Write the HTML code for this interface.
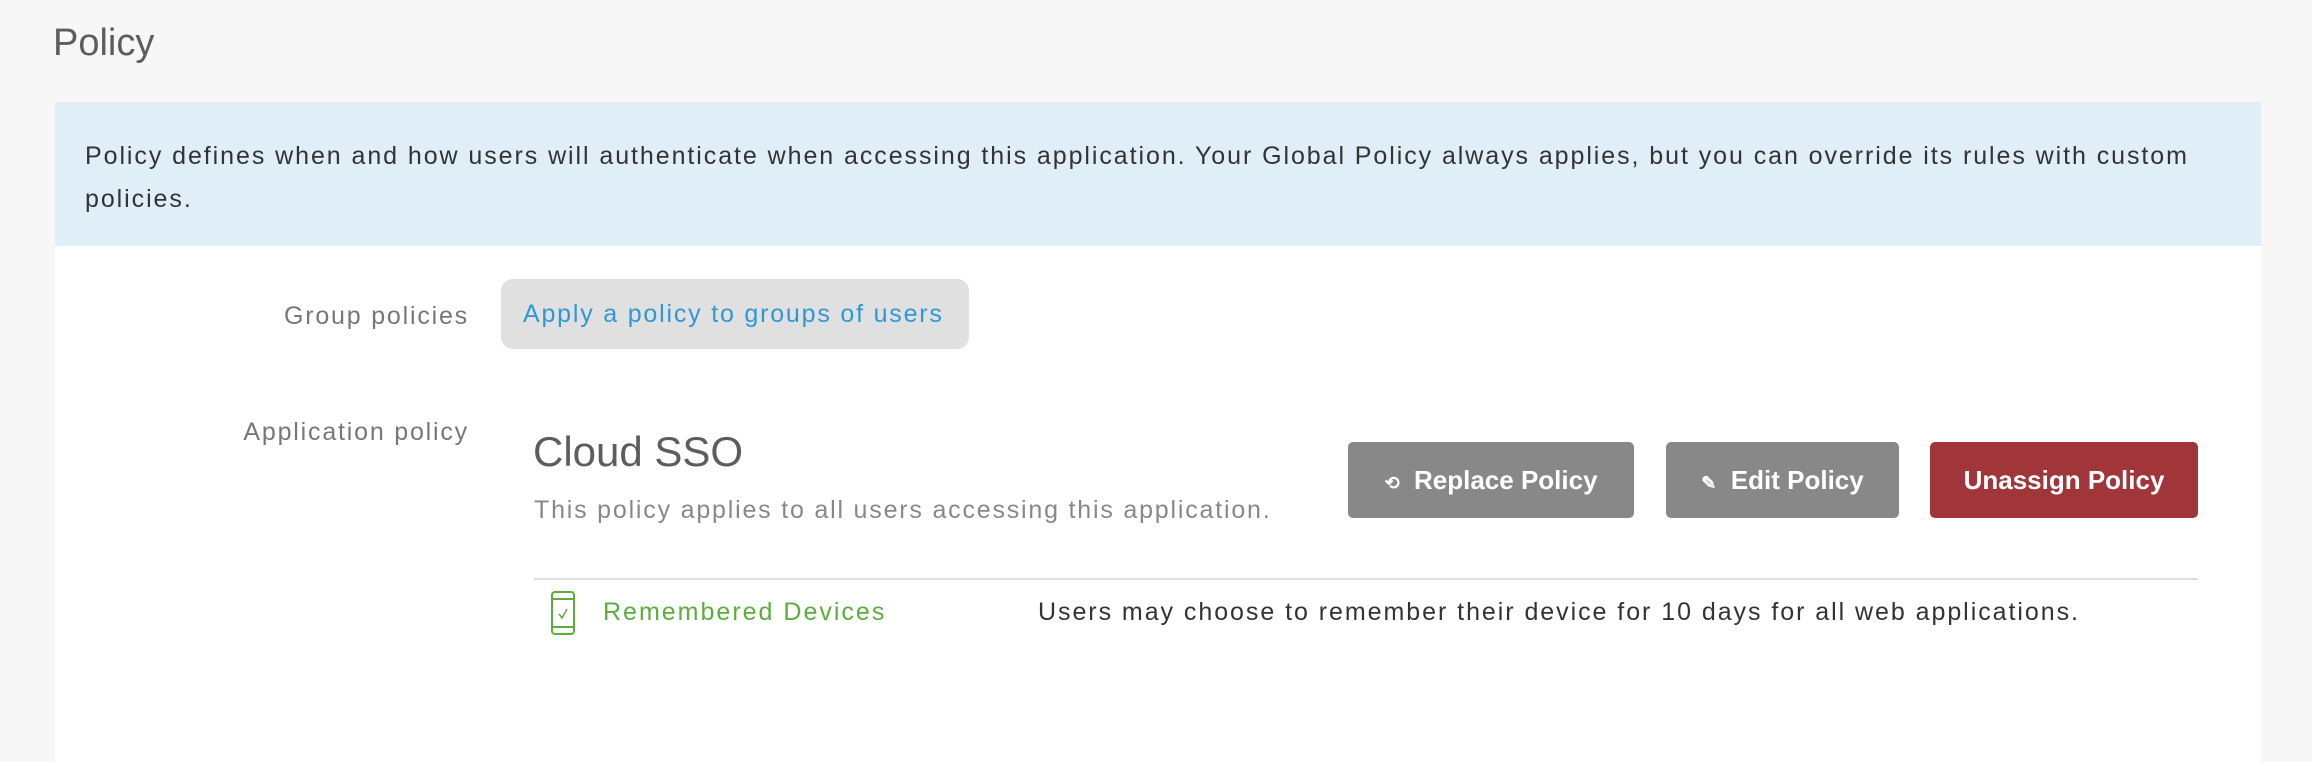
<!DOCTYPE html>
<html><head><meta charset="utf-8"><style>
*{margin:0;padding:0;box-sizing:border-box}
body{width:2312px;height:750px;background:#f7f7f7;font-family:"Liberation Sans",sans-serif;position:relative;overflow:hidden}
.a{position:absolute;white-space:nowrap}
.s{letter-spacing:1.8px}
.title{left:53px;top:22px;font-size:38px;color:#5d5d5d}
.panel{position:absolute;left:55px;top:102px;width:2206px;height:660px;background:#fff}
.info{position:absolute;left:55px;top:102px;width:2206px;height:144px;background:#dfeef7;padding:33px 30px 0 30px;font-size:25px;line-height:43px;color:#333;letter-spacing:1.93px}
.lbl{font-size:25px;color:#777;text-align:right;width:400px}
.gbtn{position:absolute;left:501px;top:279px;width:468px;height:70px;background:#e0e0e0;border-radius:12px;font-size:25px;color:#2f97d3;line-height:70px;padding-left:22px;letter-spacing:1.8px}
.btn{position:absolute;top:442px;height:76px;border-radius:5px;color:#fff;font-size:26px;font-weight:bold;line-height:76px;text-align:center}
</style></head><body>
<div class="a title">Policy</div>
<div class="panel"></div>
<div class="info">Policy defines when and how users will authenticate when accessing this application. Your Global Policy always applies, but you can override its rules with custom policies.</div>
<div class="a lbl s" style="left:69px;top:302px">Group policies</div>
<div class="gbtn">Apply a policy to groups of users</div>
<div class="a lbl s" style="left:69px;top:418px">Application policy</div>
<div class="a" style="left:533px;top:428px;font-size:42px;color:#5d5d5d">Cloud SSO</div>
<div class="a s" style="left:534px;top:496px;font-size:25px;color:#888">This policy applies to all users accessing this application.</div>
<div class="btn" style="left:1348px;width:286px;background:#888"><span style="font-size:18px">⟲</span>&nbsp; Replace Policy</div>
<div class="btn" style="left:1666px;width:233px;background:#888"><span style="font-size:18px">✎</span>&nbsp; Edit Policy</div>
<div class="btn" style="left:1930px;width:268px;background:#a0353a">Unassign Policy</div>
<div class="a" style="left:534px;top:578px;width:1664px;height:2px;background:#ddd"></div>
<svg class="a" style="left:550px;top:590px" width="28" height="46" viewBox="0 0 28 46"><rect x="2" y="2" width="22" height="42" rx="3" fill="none" stroke="#5cae3c" stroke-width="2"/><line x1="2" y1="9" x2="24" y2="9" stroke="#5cae3c" stroke-width="2"/><line x1="2" y1="37" x2="24" y2="37" stroke="#5cae3c" stroke-width="2"/><path d="M9 24l3 4 5-9" fill="none" stroke="#5cae3c" stroke-width="1.5"/></svg>
<div class="a" style="left:603px;top:598px;font-size:25px;color:#5cae3c;letter-spacing:2px">Remembered Devices</div>
<div class="a" style="left:1038px;top:598px;font-size:25px;color:#333;letter-spacing:1.95px">Users may choose to remember their device for 10 days for all web applications.</div>
</body></html>
